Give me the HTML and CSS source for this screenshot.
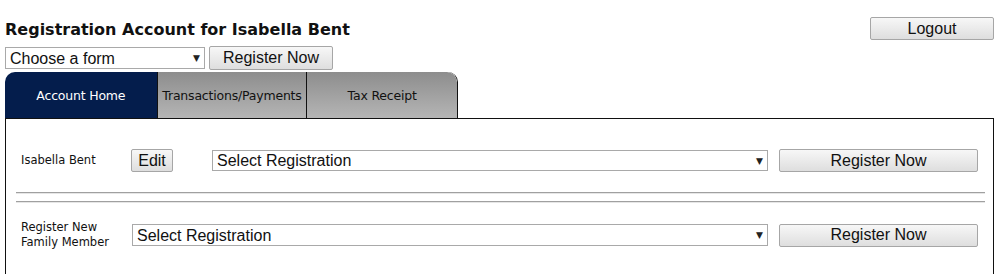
FILE: index.html
```html
<!DOCTYPE html>
<html>
<head>
<meta charset="utf-8">
<link rel="stylesheet" href="styles.css">
</head>
<body>
<div class="page">
  <div class="header">
    <div class="head-left">
      <h1 class="title">Registration Account for Isabella Bent</h1>
      <div class="form-row">
        <div class="sel-wrap sel-form"><select class="sel"><option>Choose a form</option></select></div>
        <button class="btn btn-form">Register Now</button>
      </div>
    </div>
    <button class="btn btn-logout">Logout</button>
  </div>
  <div class="tabs">
    <div class="tab tab-active">Account Home</div>
    <div class="tab">Transactions/Payments</div>
    <div class="tab tab-last">Tax Receipt</div>
  </div>
  <div class="panel">
    <div class="row row1">
      <div class="label l1">Isabella Bent</div>
      <button class="btn btn-edit">Edit</button>
      <div class="sel-wrap sel-reg1"><select class="sel"><option>Select Registration</option></select></div>
      <button class="btn btn-reg">Register Now</button>
    </div>
    <div class="divider"></div>
    <div class="divider d2"></div>
    <div class="row row2">
      <div class="label l2">Register New<br>Family Member</div>
      <div class="sel-wrap sel-reg2"><select class="sel"><option>Select Registration</option></select></div>
      <button class="btn btn-reg">Register Now</button>
    </div>
  </div>
</div>
</body>
</html>
```
FILE: styles.css
```css
* { box-sizing: border-box; }
html, body { margin: 0; padding: 0; background: #fff; }
body { font-family: "DejaVu Sans", Verdana, sans-serif; color: #111; }
.page { padding: 0 3px 0 5px; width: 997px; }
.header { display: flex; justify-content: space-between; align-items: flex-start; }
.title { margin: 0; padding-top: 20px; font-size: 16px; font-weight: bold; line-height: 19px; color: #111; }
.form-row { display: flex; align-items: center; gap: 4px; margin-top: 7px; height: 24px; }
.btn {
  font-family: "Liberation Sans", Arial, sans-serif; font-size: 16px; color: #111;
  background: linear-gradient(#f7f7f7, #dedede);
  border: 1px solid #a6a6a6; border-radius: 2px; padding: 0; line-height: 20px; cursor: pointer;
}
.btn-form { width: 124px; height: 24px; }
.btn-logout { width: 124px; height: 23px; margin-top: 17px; }
.sel-wrap { position: relative; }
.sel-wrap::after {
  content: "\25BC"; position: absolute; right: 5px; top: 50%; transform: translateY(-50%);
  font-size: 9px; color: #222; pointer-events: none; font-family: "DejaVu Sans", sans-serif;
}
.sel {
  appearance: none; -webkit-appearance: none; width: 100%; height: 100%;
  font-family: "Liberation Sans", Arial, sans-serif; font-size: 16px; color: #111;
  background: #fff; border: 1px solid #a9a9a9; border-radius: 0; padding: 0 0 0 4px; margin: 0;
}
.sel-form { width: 200px; height: 22px; }
.tabs {
  display: flex; margin-top: 2px; height: 46px; width: 453px;
  border-radius: 10px 10px 0 0; overflow: hidden; border-right: 1px solid #111;
}
.tab {
  width: 150px; display: flex; align-items: center; justify-content: center;
  font-size: 12.5px; color: #111;
  background: linear-gradient(#8d8d8d, #b5b5b5);
  border-left: 1px solid #111; letter-spacing: -0.2px;
}
.tab-active { width: 152px; background: #041d4c; color: #fff; border-left: none; }
.tab-last { width: 151px; border-radius: 0 10px 0 0; }
.panel {
  border-top: 1px solid #111; border-left: 1px solid #111; border-right: 1px solid #111;
  height: 160px; padding: 30px 14px 0 15px;
}
.row { display: flex; align-items: center; }
.label { font-size: 11.5px; line-height: 15px; color: #111; }
.l1 { width: 110px; }
.l2 { width: 111px; }
.btn-edit { width: 42px; height: 23px; margin-right: 39px; }
.sel-reg1 { width: 556px; height: 21px; }
.sel-reg2 { width: 636px; height: 22px; }
.btn-reg { width: 199px; height: 23px; margin-left: 11px; }
.row2 { margin-top: 17px; }
.divider { height: 2px; border-top: 1px solid #a0a0a0; border-bottom: 1px solid #e6e6e6; margin: 20px -6px 0 -5px; }
.d2 { margin-top: 7px; }
```
